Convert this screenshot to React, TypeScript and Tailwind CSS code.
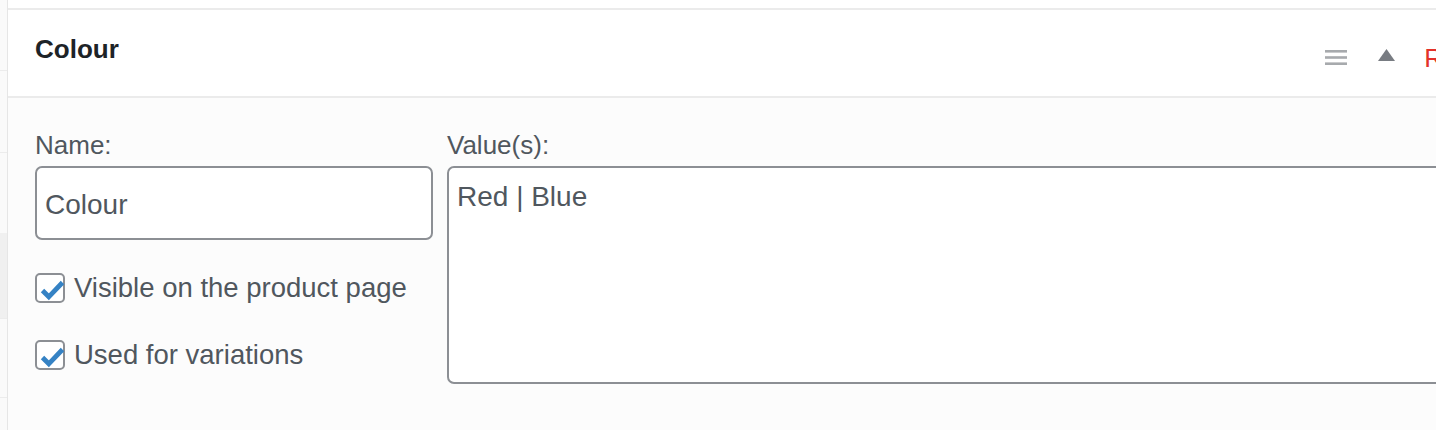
import React from "react";

function CheckRow({ label }: { label: string }) {
  return (
    <label className="flex items-center gap-[9px]">
      <span className="flex h-[30px] w-[30px] shrink-0 items-center justify-center rounded-[5px] border-2 border-[#8c8f94] bg-white">
        <svg width="30" height="30" viewBox="0 0 30 30" className="-m-[2px]" aria-hidden="true">
          <path d="M7.5 17.5 L13.8 23.8 L27.5 9.5" fill="none" stroke="#3582c4" strokeWidth="4.8" strokeLinejoin="miter" />
        </svg>
      </span>
      <span className="text-[27.5px] leading-[30px] text-[#50575e]">{label}</span>
    </label>
  );
}

export default function App() {
  return (
    <div className="flex h-[430px] w-[1436px] overflow-hidden bg-white font-['Liberation_Sans',Arial,sans-serif]">
      {/* page behind the panel */}
      <div className="flex w-[8px] shrink-0 flex-col border-r border-[#e6e6e6] bg-[#fafafa]">
        <div className="h-[71px] border-b border-[#ececec]" />
        <div className="h-[82px] border-b border-[#ececec]" />
        <div className="h-[80px]" />
        <div className="h-[86px] border-b border-[#ececec] bg-[#f0f0f0]" />
        <div className="h-[79px] border-b border-[#ececec]" />
        <div className="flex-1" />
      </div>

      <div className="flex w-[1540px] shrink-0 flex-col">
        <div className="h-[8px] bg-white" />
        <div className="flex h-[90px] items-start border-y-2 border-[#ebebeb] bg-white px-[27px] pt-[24px]">
          <h3 className="text-[26px] font-bold leading-[30px] text-[#1d2327]">Colour</h3>
          <div className="ml-auto flex items-start">
            <svg width="22" height="16" viewBox="0 0 22 16" aria-hidden="true" className="mt-[16px]">
              <rect x="0" y="0" width="22" height="2.6" fill="#a7aaad" />
              <rect x="0" y="6.2" width="22" height="2.6" fill="#a7aaad" />
              <rect x="0" y="12.4" width="22" height="2.6" fill="#a7aaad" />
            </svg>
            <svg width="17" height="12" viewBox="0 0 17 12" aria-hidden="true" className="ml-[31px] mt-[15px]">
              <path d="M8.5 0 L17 12 L0 12 Z" fill="#787c82" />
            </svg>
            <span className="ml-[29px] mt-[9px] text-[26px] leading-[30px] text-[#e3312a]">Remove</span>
          </div>
        </div>

        <div className="flex flex-1 gap-[14px] bg-[#fcfcfc] px-[27px] pt-[32px]">
          <div className="flex w-[398px] shrink-0 flex-col">
            <span className="text-[26px] leading-[30px] text-[#50575e]">Name:</span>
            <input
              readOnly
              defaultValue="Colour"
              className="mt-[6px] h-[74px] w-full rounded-[7px] border-2 border-[#8c8f94] bg-white px-[8px] pt-[3px] text-[28px] text-[#50575e] outline-none"
            />
            <div className="mt-[33px] flex flex-col gap-[37px]">
              <CheckRow label="Visible on the product page" />
              <CheckRow label="Used for variations" />
            </div>
          </div>
          <div className="flex flex-1 flex-col">
            <span className="text-[26px] leading-[30px] text-[#50575e]">Value(s):</span>
            <textarea
              readOnly
              defaultValue="Red | Blue"
              className="mt-[6px] h-[218px] w-full resize-none rounded-[7px] border-2 border-[#8c8f94] bg-white px-[8px] pt-[11px] text-[28px] leading-[36px] text-[#50575e] outline-none"
            />
          </div>
        </div>
      </div>
    </div>
  );
}
